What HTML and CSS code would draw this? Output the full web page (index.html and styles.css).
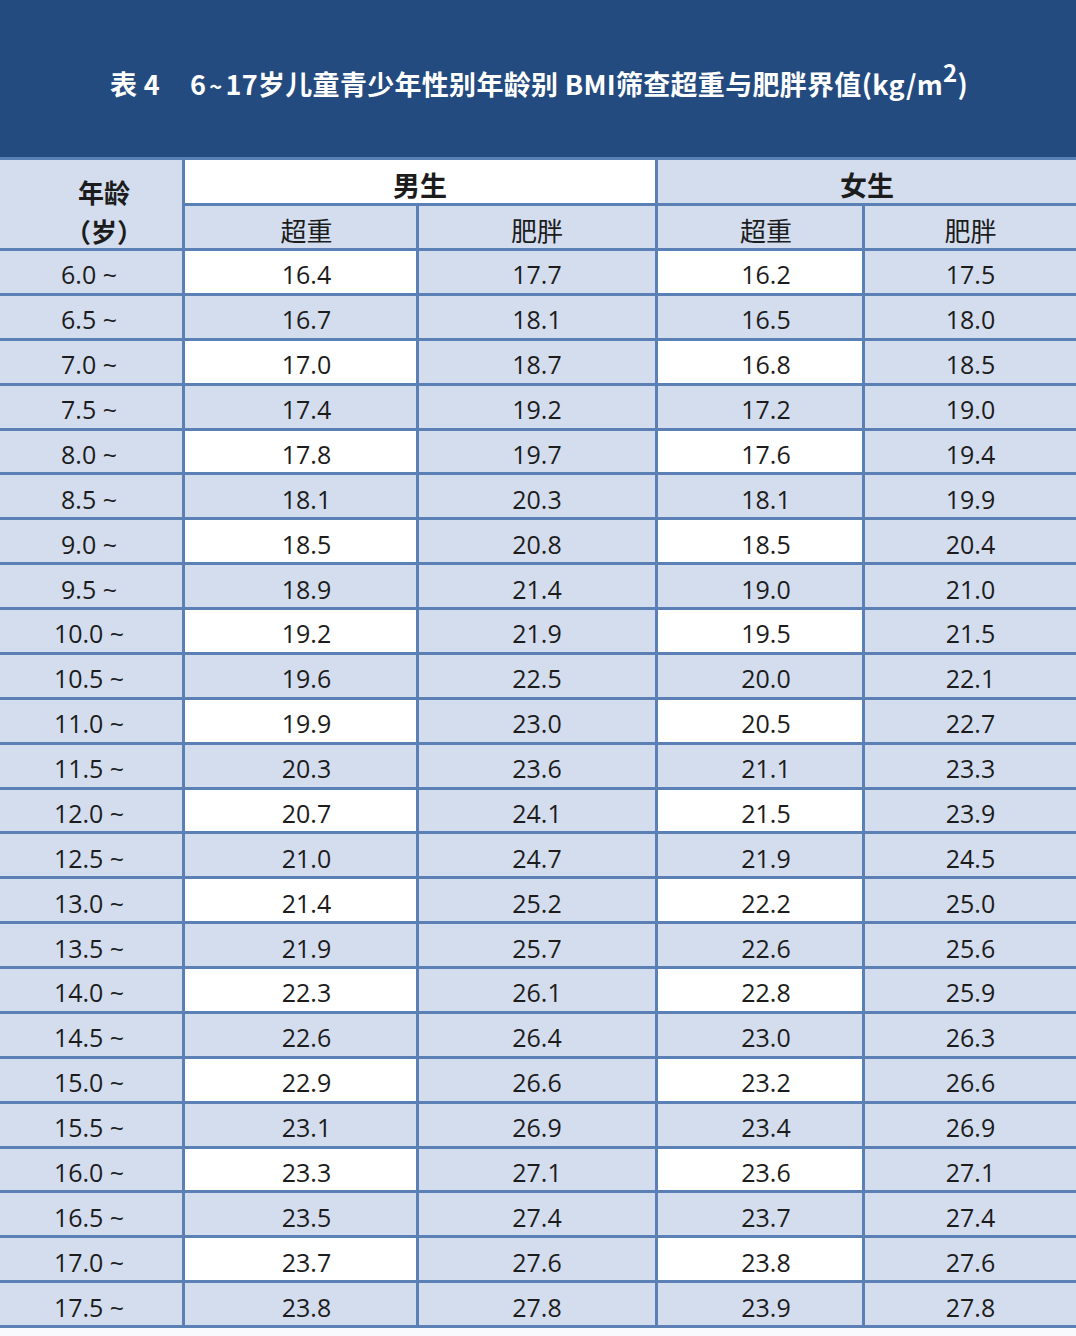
FILE: index.html
```html
<!DOCTYPE html>
<html lang="zh-CN">
<head>
<meta charset="utf-8">
<title>BMI筛查超重与肥胖界值</title>
<link rel="stylesheet" href="styles.css">
</head>
<body>
<div class="page">
  <header class="banner">
    <h1 class="title"><span class="tno">表 4</span><span class="tmain">6<span class="tl">~</span>17岁儿童青少年性别年龄别 BMI筛查超重与肥胖界值(kg/m<sup class="sq">2</sup>)</span></h1>
  </header>
  <div class="grid">
    <div class="c age-h"><span>年龄</span><span>（岁）</span></div>
    <div class="c sex w">男生</div>
    <div class="c sex">女生</div>
    <div class="c sub o">超重</div>
    <div class="c sub">肥胖</div>
    <div class="c sub o">超重</div>
    <div class="c sub">肥胖</div>

    <div class="c age">6.0 ~</div><div class="c n o w">16.4</div><div class="c n">17.7</div><div class="c n o w">16.2</div><div class="c n">17.5</div>
    <div class="c age">6.5 ~</div><div class="c n o">16.7</div><div class="c n">18.1</div><div class="c n o">16.5</div><div class="c n">18.0</div>
    <div class="c age">7.0 ~</div><div class="c n o w">17.0</div><div class="c n">18.7</div><div class="c n o w">16.8</div><div class="c n">18.5</div>
    <div class="c age">7.5 ~</div><div class="c n o">17.4</div><div class="c n">19.2</div><div class="c n o">17.2</div><div class="c n">19.0</div>
    <div class="c age">8.0 ~</div><div class="c n o w">17.8</div><div class="c n">19.7</div><div class="c n o w">17.6</div><div class="c n">19.4</div>
    <div class="c age">8.5 ~</div><div class="c n o">18.1</div><div class="c n">20.3</div><div class="c n o">18.1</div><div class="c n">19.9</div>
    <div class="c age">9.0 ~</div><div class="c n o w">18.5</div><div class="c n">20.8</div><div class="c n o w">18.5</div><div class="c n">20.4</div>
    <div class="c age">9.5 ~</div><div class="c n o">18.9</div><div class="c n">21.4</div><div class="c n o">19.0</div><div class="c n">21.0</div>
    <div class="c age">10.0 ~</div><div class="c n o w">19.2</div><div class="c n">21.9</div><div class="c n o w">19.5</div><div class="c n">21.5</div>
    <div class="c age">10.5 ~</div><div class="c n o">19.6</div><div class="c n">22.5</div><div class="c n o">20.0</div><div class="c n">22.1</div>
    <div class="c age">11.0 ~</div><div class="c n o w">19.9</div><div class="c n">23.0</div><div class="c n o w">20.5</div><div class="c n">22.7</div>
    <div class="c age">11.5 ~</div><div class="c n o">20.3</div><div class="c n">23.6</div><div class="c n o">21.1</div><div class="c n">23.3</div>
    <div class="c age">12.0 ~</div><div class="c n o w">20.7</div><div class="c n">24.1</div><div class="c n o w">21.5</div><div class="c n">23.9</div>
    <div class="c age">12.5 ~</div><div class="c n o">21.0</div><div class="c n">24.7</div><div class="c n o">21.9</div><div class="c n">24.5</div>
    <div class="c age">13.0 ~</div><div class="c n o w">21.4</div><div class="c n">25.2</div><div class="c n o w">22.2</div><div class="c n">25.0</div>
    <div class="c age">13.5 ~</div><div class="c n o">21.9</div><div class="c n">25.7</div><div class="c n o">22.6</div><div class="c n">25.6</div>
    <div class="c age">14.0 ~</div><div class="c n o w">22.3</div><div class="c n">26.1</div><div class="c n o w">22.8</div><div class="c n">25.9</div>
    <div class="c age">14.5 ~</div><div class="c n o">22.6</div><div class="c n">26.4</div><div class="c n o">23.0</div><div class="c n">26.3</div>
    <div class="c age">15.0 ~</div><div class="c n o w">22.9</div><div class="c n">26.6</div><div class="c n o w">23.2</div><div class="c n">26.6</div>
    <div class="c age">15.5 ~</div><div class="c n o">23.1</div><div class="c n">26.9</div><div class="c n o">23.4</div><div class="c n">26.9</div>
    <div class="c age">16.0 ~</div><div class="c n o w">23.3</div><div class="c n">27.1</div><div class="c n o w">23.6</div><div class="c n">27.1</div>
    <div class="c age">16.5 ~</div><div class="c n o">23.5</div><div class="c n">27.4</div><div class="c n o">23.7</div><div class="c n">27.4</div>
    <div class="c age">17.0 ~</div><div class="c n o w">23.7</div><div class="c n">27.6</div><div class="c n o w">23.8</div><div class="c n">27.6</div>
    <div class="c age">17.5 ~</div><div class="c n o">23.8</div><div class="c n">27.8</div><div class="c n o">23.9</div><div class="c n">27.8</div>
  </div>
</div>
</body>
</html>
```

FILE: styles.css
```css
html, body {
  margin: 0;
  padding: 0;
  background: #f7f9fc;
}
.page {
  width: 1076px;
  height: 1336px;
  overflow: hidden;
  font-family: "Open Sans", "Noto Sans CJK SC", sans-serif;
  color: #1c1c1c;
}
.banner {
  height: 157px;
  background: #234b7f;
  display: flex;
  align-items: center;
  justify-content: center;
  box-sizing: border-box;
  padding-top: 10px;
}
.title {
  margin: 0;
  color: #ffffff;
  font-family: "Noto Sans CJK SC", sans-serif;
  font-weight: 700;
  font-size: 27px;
  letter-spacing: 0.3px;
  white-space: nowrap;
  display: flex;
  gap: 30px;
  padding-left: 2px;
}
.tl {
  font-size: 22px;
  padding: 0 3px;
}
.sq {
  font-size: 24px;
  vertical-align: 0;
  position: relative;
  top: -13px;
  line-height: 0;
}
.grid {
  display: grid;
  grid-template-columns: 182px 231px 236px 204px 211px;
  grid-template-rows: 43px 42px repeat(24, 41.875px);
  gap: 3px;
  padding: 3px 0 3px 0;
  background: #5a80b6;
}
.c {
  background: #d4ddee;
  display: flex;
  align-items: center;
  justify-content: center;
}
.c.w {
  background: #ffffff;
}
.c.o {
  padding-left: 12px;
}
.age-h {
  grid-row: span 2;
  flex-direction: column;
  font-family: "Noto Sans CJK SC", sans-serif;
  font-weight: 700;
  font-size: 26px;
  line-height: 39px;
  padding-left: 26px;
  padding-top: 14px;
}
.sex {
  grid-column: span 2;
  font-family: "Noto Sans CJK SC", sans-serif;
  font-weight: 700;
  font-size: 27px;
  padding-top: 6px;
}
.sub {
  font-family: "Noto Sans CJK SC", sans-serif;
  font-weight: 400;
  font-size: 26px;
  padding-top: 5px;
}
.n, .age {
  font-size: 25px;
  padding-top: 5px;
}
.age {
  padding-right: 4px;
}
```
